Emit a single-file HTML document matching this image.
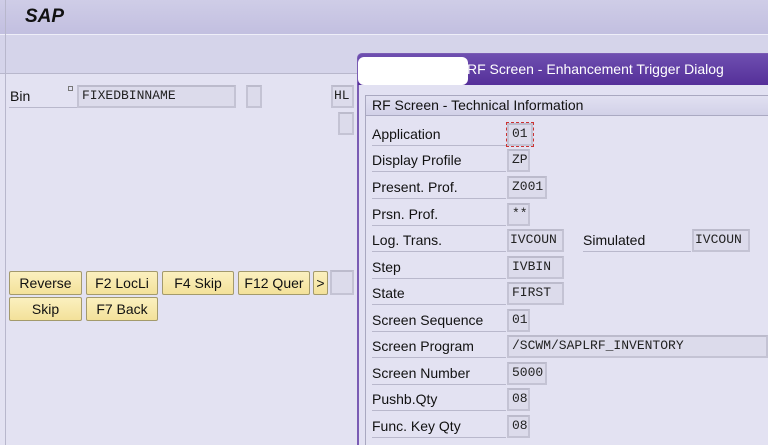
<!DOCTYPE html><html style="height:445px;overflow:hidden"><head><style>
*{margin:0;padding:0;box-sizing:border-box}
body{width:768px;height:445px;overflow:hidden;background:#e3e2f2;font-family:"Liberation Sans",sans-serif;font-size:14px;color:#111;position:relative}
.a{position:absolute}
.fld{position:absolute;background:#dcdbeb;border:2px solid #c4c3d4;border-top-color:#bcbbcc;font-family:"Liberation Mono",monospace;font-size:13px;line-height:18px;padding-left:3px;color:#222}
.lbl{position:absolute;left:372px;width:134px;height:24px;line-height:24px;border-bottom:1px solid #b9b8cc}
.btn{position:absolute;height:24px;background:linear-gradient(#fbf0bf,#f3e19a);border:1px solid #a39a6c;border-radius:2px;text-align:center;line-height:22px;font-size:14px}
</style></head><body>
<div class="a" style="left:0;top:0;width:768px;height:34px;background:linear-gradient(#cfcde7,#c2bfe0)"></div>
<div class="a" style="left:25px;top:6px;font-weight:bold;font-style:italic;font-size:19px">SAP</div>
<div class="a" style="left:0;top:34px;width:768px;height:40px;background:#d5d4ea;border-top:1px solid #eeeef8;border-bottom:1px solid #b8b7cc"></div>
<div class="a" style="left:5px;top:0;width:1px;height:445px;background:#b8b7cc"></div>
<div class="a" style="left:10px;top:88px">Bin</div>
<div class="a" style="left:9px;top:107px;width:68px;height:1px;background:#b9b8cc"></div>
<div class="a" style="left:68px;top:86px;width:5px;height:5px;border:1px solid #777"></div>
<div class="fld" style="left:77px;top:85px;width:159px;height:23px">FIXEDBINNAME</div>
<div class="fld" style="left:246px;top:85px;width:16px;height:23px"></div>
<div class="fld" style="left:331px;top:85px;width:23px;height:23px;padding-left:1px">HL</div>
<div class="fld" style="left:338px;top:112px;width:16px;height:23px"></div>
<div class="btn" style="left:9px;top:271px;width:73px">Reverse</div>
<div class="btn" style="left:86px;top:271px;width:72px">F2 LocLi</div>
<div class="btn" style="left:162px;top:271px;width:72px">F4 Skip</div>
<div class="btn" style="left:238px;top:271px;width:72px">F12 Quer</div>
<div class="btn" style="left:313px;top:271px;width:15px">&gt;</div>
<div class="fld" style="left:330px;top:270px;width:24px;height:25px"></div>
<div class="btn" style="left:9px;top:297px;width:73px">Skip</div>
<div class="btn" style="left:86px;top:297px;width:72px">F7 Back</div>
<div class="a" style="left:357px;top:53px;width:411px;height:392px;background:#e2e1f2;border-left:2px solid #7a5cb4;border-top:2px solid #7a5cb4;border-radius:5px 0 0 0"></div>
<div class="a" style="left:358px;top:54px;width:410px;height:31px;background:linear-gradient(#6e4fb0,#552f99);border-radius:4px 0 0 0"></div>
<div class="a" style="left:358px;top:57px;width:110px;height:28px;background:#fff;border-radius:6px"></div>
<div class="a" style="left:467px;top:61px;color:#fff;font-size:14px">RF Screen - Enhancement Trigger Dialog</div>
<div class="a" style="left:365px;top:95px;width:403px;height:350px;border-left:1px solid #a9a8c0;border-top:1px solid #a9a8c0;background:#e3e2f2"></div>
<div class="a" style="left:366px;top:96px;width:402px;height:20px;background:linear-gradient(#e1e0f1,#d2d1e8);border-bottom:1px solid #aaa9c2;padding-left:6px;line-height:19px">RF Screen - Technical Information</div>
<div class="lbl" style="top:122px">Application</div><div class="fld" style="left:507px;top:123px;width:26px;height:23px;outline:1px dashed #c33">01</div>
<div class="lbl" style="top:148px">Display Profile</div><div class="fld" style="left:507px;top:149px;width:23px;height:23px">ZP</div>
<div class="lbl" style="top:175px">Present. Prof.</div><div class="fld" style="left:507px;top:176px;width:40px;height:23px">Z001</div>
<div class="lbl" style="top:202px">Prsn. Prof.</div><div class="fld" style="left:507px;top:203px;width:23px;height:23px">**</div>
<div class="lbl" style="top:228px">Log. Trans.</div><div class="fld" style="left:507px;top:229px;width:57px;height:23px;padding-left:1px">IVCOUN</div>
<div class="lbl" style="top:228px;left:583px;width:108px">Simulated</div><div class="fld" style="left:692px;top:229px;width:58px;height:23px;padding-left:1px">IVCOUN</div>
<div class="lbl" style="top:255px">Step</div><div class="fld" style="left:507px;top:256px;width:57px;height:23px">IVBIN</div>
<div class="lbl" style="top:281px">State</div><div class="fld" style="left:507px;top:282px;width:57px;height:23px">FIRST</div>
<div class="lbl" style="top:308px">Screen Sequence</div><div class="fld" style="left:507px;top:309px;width:23px;height:23px">01</div>
<div class="lbl" style="top:334px">Screen Program</div><div class="fld" style="left:507px;top:335px;width:261px;height:23px">/SCWM/SAPLRF_INVENTORY</div>
<div class="lbl" style="top:361px">Screen Number</div><div class="fld" style="left:507px;top:362px;width:40px;height:23px">5000</div>
<div class="lbl" style="top:387px">Pushb.Qty</div><div class="fld" style="left:507px;top:388px;width:23px;height:23px">08</div>
<div class="lbl" style="top:414px">Func. Key Qty</div><div class="fld" style="left:507px;top:415px;width:23px;height:23px">08</div>
</body></html>
